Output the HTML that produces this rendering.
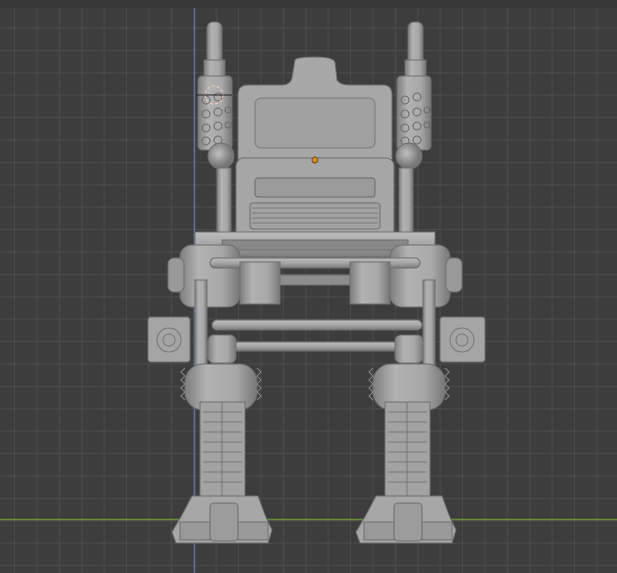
<!DOCTYPE html>
<html><head><meta charset="utf-8"><style>
html,body{margin:0;padding:0;background:#3d3d3d;width:617px;height:573px;overflow:hidden}
</style></head><body>
<svg width="617" height="573" viewBox="0 0 617 573" xmlns="http://www.w3.org/2000/svg">
<defs>
<pattern id="g" x="14" y="5" width="22.4" height="22.4" patternUnits="userSpaceOnUse">
<path d="M0.5 0V22.4M0 0.5H22.4" stroke="#4b4b4b" stroke-width="1.2" fill="none"/>
</pattern>
<linearGradient id="cy" x1="0" x2="1"><stop offset="0" stop-color="#7e7e7e"/><stop offset=".3" stop-color="#b2b2b2"/><stop offset=".7" stop-color="#a8a8a8"/><stop offset="1" stop-color="#777"/></linearGradient>
<linearGradient id="hz" x1="0" y1="0" x2="0" y2="1"><stop offset="0" stop-color="#bdbdbd"/><stop offset=".5" stop-color="#a6a6a6"/><stop offset="1" stop-color="#7a7a7a"/></linearGradient>
<radialGradient id="sp" cx=".4" cy=".4"><stop offset="0" stop-color="#c0c0c0"/><stop offset="1" stop-color="#777"/></radialGradient>
</defs>
<rect width="617" height="573" fill="#3d3d3d"/>
<rect width="617" height="573" fill="url(#g)"/>
<rect width="617" height="8" fill="#383838"/>
<line x1="194.5" y1="8" x2="194.5" y2="573" stroke="#5a7398" stroke-width="1.5"/>
<line x1="0" y1="519.5" x2="617" y2="519.5" stroke="#6a8f3c" stroke-width="1.5"/>
<g fill="#a5a5a5" stroke="#6e6e6e" stroke-width="1">
<!-- antennas -->
<rect x="207" y="22" width="15" height="56" rx="6" fill="url(#cy)"/>
<rect x="204" y="60" width="21" height="18" fill="url(#cy)"/>
<rect x="198" y="76" width="34" height="74" rx="4" fill="url(#cy)"/>
<rect x="408" y="22" width="15" height="56" rx="6" fill="url(#cy)"/>
<rect x="405" y="60" width="21" height="18" fill="url(#cy)"/>
<rect x="397" y="76" width="34" height="74" rx="4" fill="url(#cy)"/>
<g fill="none" stroke="#6a6a6a">
<circle cx="206" cy="100" r="4"/><circle cx="218" cy="97" r="4"/><circle cx="206" cy="114" r="4"/><circle cx="218" cy="112" r="4"/><circle cx="206" cy="128" r="4"/><circle cx="218" cy="126" r="4"/><circle cx="206" cy="141" r="4"/><circle cx="218" cy="140" r="4"/><circle cx="228" cy="110" r="3"/><circle cx="228" cy="125" r="3"/>
<circle cx="405" cy="100" r="4"/><circle cx="417" cy="97" r="4"/><circle cx="405" cy="114" r="4"/><circle cx="417" cy="112" r="4"/><circle cx="405" cy="128" r="4"/><circle cx="417" cy="126" r="4"/><circle cx="405" cy="141" r="4"/><circle cx="417" cy="140" r="4"/><circle cx="427" cy="110" r="3"/><circle cx="427" cy="125" r="3"/>
</g>
<circle cx="221" cy="156" r="13" fill="url(#sp)"/>
<circle cx="409" cy="156" r="13" fill="url(#sp)"/>
<rect x="217" y="168" width="14" height="65" fill="url(#cy)"/>
<rect x="399" y="168" width="14" height="65" fill="url(#cy)"/>
<!-- head -->
<path d="M295 60 Q297 57 315 57 Q333 57 335 62 L337 80 Q340 85 350 85 L383 85 Q392 85 392 95 L392 160 L238 160 L238 95 Q238 85 248 85 L282 85 Q290 85 292 78 Z" fill="#a7a7a7"/>
<rect x="255" y="98" width="120" height="50" rx="6" fill="#a0a0a0" stroke="#7a7a7a"/>
<rect x="236" y="158" width="158" height="84" rx="8" fill="#a6a6a6"/>
<rect x="255" y="178" width="120" height="19" rx="3" fill="#9b9b9b" stroke="#6a6a6a"/>
<rect x="250" y="203" width="130" height="26" rx="3" fill="#a2a2a2"/>
<g stroke="#7b7b7b"><line x1="252" y1="208" x2="378" y2="208"/><line x1="252" y1="213" x2="378" y2="213"/><line x1="252" y1="218" x2="378" y2="218"/><line x1="252" y1="223" x2="378" y2="223"/></g>
<circle cx="315" cy="160" r="3" fill="#d38a2c" stroke="#7a4a10"/>
<!-- body -->
<rect x="195" y="232" width="240" height="25" fill="url(#hz)"/>
<rect x="222" y="240" width="186" height="10" fill="#888"/>
<rect x="180" y="245" width="60" height="62" rx="12" fill="url(#cy)"/>
<rect x="390" y="245" width="60" height="62" rx="12" fill="url(#cy)"/>
<rect x="168" y="258" width="16" height="34" rx="6" fill="#999"/>
<rect x="446" y="258" width="16" height="34" rx="6" fill="#999"/>
<rect x="210" y="258" width="210" height="10" rx="5" fill="url(#hz)"/>
<rect x="240" y="262" width="40" height="42" fill="url(#cy)"/>
<rect x="350" y="262" width="40" height="42" fill="url(#cy)"/>
<rect x="280" y="275" width="70" height="10" fill="#8e8e8e"/>
<!-- poles and bars -->
<rect x="195" y="280" width="12" height="88" fill="url(#cy)"/>
<rect x="423" y="280" width="12" height="88" fill="url(#cy)"/>
<rect x="212" y="320" width="210" height="10" rx="5" fill="url(#hz)"/>
<rect x="225" y="342" width="180" height="9" rx="4" fill="url(#hz)"/>
<rect x="148" y="317" width="42" height="45" rx="3" fill="#a5a5a5"/>
<circle cx="169" cy="340" r="12" fill="none" stroke="#777"/><circle cx="169" cy="340" r="6" fill="none" stroke="#777"/>
<rect x="440" y="317" width="45" height="45" rx="3" fill="#a5a5a5"/>
<circle cx="462" cy="340" r="12" fill="none" stroke="#777"/><circle cx="462" cy="340" r="6" fill="none" stroke="#777"/>
<rect x="208" y="335" width="28" height="28" rx="6" fill="url(#cy)"/>
<rect x="395" y="335" width="28" height="28" rx="6" fill="url(#cy)"/>
<!-- knees -->
<rect x="185" y="364" width="72" height="46" rx="18" fill="url(#cy)"/>
<rect x="373" y="364" width="72" height="46" rx="18" fill="url(#cy)"/>
<g stroke="#888" fill="none"><path d="M185 368 l-4 4 4 4 -4 4 4 4 -4 4 4 4 -4 4 4 4"/><path d="M257 368 l4 4 -4 4 4 4 -4 4 4 4 -4 4 4 4 -4 4"/><path d="M373 368 l-4 4 4 4 -4 4 4 4 -4 4 4 4 -4 4 4 4"/><path d="M445 368 l4 4 -4 4 4 4 -4 4 4 4 -4 4 4 4 -4 4"/></g>
<!-- legs -->
<rect x="200" y="402" width="45" height="95" fill="#a3a3a3"/>
<rect x="385" y="402" width="45" height="95" fill="#a3a3a3"/>
<g stroke="#777"><path d="M203 412H242M203 422H242M203 432H242M203 442H242M203 452H242M203 462H242M203 472H242M203 482H242M222 402V497"/><path d="M388 412H427M388 422H427M388 432H427M388 442H427M388 452H427M388 462H427M388 472H427M388 482H427M407 402V497"/></g>
<!-- feet -->
<path d="M192 496H258L265 515L272 530L268 543H176L172 532L182 515Z" fill="#a7a7a7"/>
<path d="M376 496H442L449 515L456 530L452 543H360L356 532L366 515Z" fill="#a7a7a7"/>
<rect x="210" y="503" width="28" height="38" rx="4" fill="#9c9c9c"/>
<rect x="394" y="503" width="28" height="38" rx="4" fill="#9c9c9c"/>
<rect x="180" y="522" width="30" height="18" fill="#999"/><rect x="238" y="522" width="30" height="18" fill="#999"/>
<rect x="364" y="522" width="30" height="18" fill="#999"/><rect x="422" y="522" width="30" height="18" fill="#999"/>
</g>
<circle cx="214" cy="95" r="9" fill="none" stroke="#e8c8c0" stroke-dasharray="3 2" stroke-width="1.3"/>
<line x1="196" y1="95" x2="232" y2="95" stroke="#222"/>
</svg>
</body></html>
